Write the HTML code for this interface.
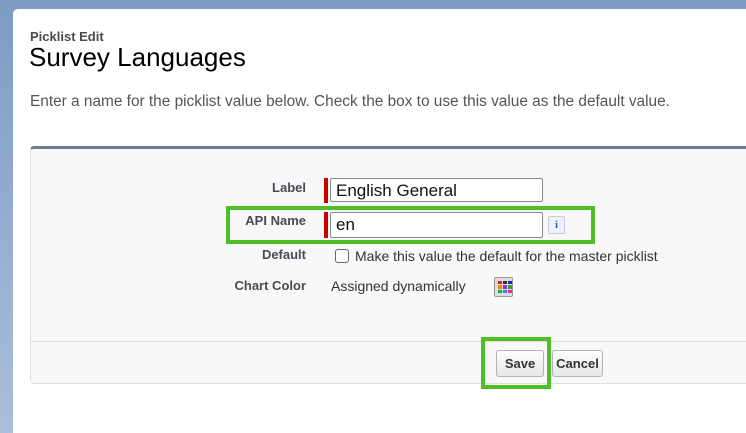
<!DOCTYPE html>
<html><head><style>
html,body{margin:0;width:746px;height:433px;overflow:hidden}
body{background:linear-gradient(180deg,#7d9cc4,#a9bfdc);font-family:"Liberation Sans",Arial,sans-serif;position:relative}
.card{position:absolute;left:13px;top:9px;width:760px;height:430px;background:#fff;border-radius:5px}
.a{position:absolute}
.lbl{position:absolute;font-size:13px;font-weight:bold;color:#4a4a56;text-align:right;width:110px}
.inp{position:absolute;left:330px;height:24px;border:1px solid #8a8a8a;border-radius:2px;background:#fff;font-size:17px;line-height:24px;padding-left:5px;box-sizing:border-box;width:213px;color:#111}
.red{position:absolute;left:324px;width:4px;background:#c00}
.btn{position:absolute;top:350px;height:27px;border:1px solid #b5b5b5;border-radius:3px;background:linear-gradient(#fdfdfd,#e8e8e8);font-size:13px;font-weight:bold;color:#333;text-align:center;line-height:26px;box-sizing:border-box}
.g{position:absolute;border:4px solid #4fbf26;box-sizing:border-box}
</style></head><body>
<div class="card"></div>
<div class="a" style="left:30px;top:29px;font-size:13px;font-weight:bold;color:#4a4a56">Picklist Edit</div>
<div class="a" style="left:29px;top:42px;font-size:26px;color:#000">Survey Languages</div>
<div class="a" style="left:30px;top:93px;font-size:15.4px;color:#555;white-space:nowrap">Enter a name for the picklist value below. Check the box to use this value as the default value.</div>
<div class="a" style="left:30px;top:146px;width:730px;height:238px;background:#f8f8f8;border-top:3px solid #717c96;border-left:1px solid #e0e0e0;border-bottom:1px solid #e0e0e0;border-radius:4px 0 0 4px;box-sizing:border-box"></div>
<div class="a" style="left:31px;top:341px;width:720px;height:1px;background:#dcdcdc"></div>
<div class="lbl" style="left:196px;top:180px">Label</div>
<div class="red" style="top:178px;height:25px"></div>
<div class="inp" style="top:178px">English General</div>
<div class="lbl" style="left:196px;top:213px">API Name</div>
<div class="red" style="top:212px;height:26px"></div>
<div class="inp" style="top:212px;height:26px">en</div>
<div class="a" style="left:548px;top:216px;width:17px;height:18px;border:1px solid #c6ccd6;border-radius:2px;background:#eef2f8;box-sizing:border-box;color:#2a5fb8;font:bold 11px 'Liberation Serif',serif;text-align:center;line-height:16px">i</div>
<div class="lbl" style="left:196px;top:247px">Default</div>
<div class="a" style="left:335px;top:249px;width:14px;height:14px;border:1px solid #666;border-radius:3px;background:#fff;box-sizing:border-box"></div>
<div class="a" style="left:355px;top:248px;font-size:14px;color:#333">Make this value the default for the master picklist</div>
<div class="lbl" style="left:196px;top:278px">Chart Color</div>
<div class="a" style="left:331px;top:278px;font-size:14px;color:#333">Assigned dynamically</div>
<div class="a" style="left:494px;top:277px;width:19px;height:20px;border:1px solid #999;border-radius:2px;background:#ddd;box-sizing:border-box;display:grid;grid-template-columns:repeat(3,4px);gap:1px;padding:3px 3px">
<i style="background:#d22"></i><i style="background:#333"></i><i style="background:#22a"></i>
<i style="background:#e80"></i><i style="background:#a2c"></i><i style="background:#2a2"></i>
<i style="background:#1a4"></i><i style="background:#28e"></i><i style="background:#e2a"></i></div>
<div class="btn" style="left:496px;width:48px">Save</div>
<div class="btn" style="left:552px;width:51px">Cancel</div>
<div class="g" style="left:226px;top:206px;width:369px;height:38px"></div>
<div class="g" style="left:481px;top:337px;width:70px;height:52px"></div>
</body></html>
